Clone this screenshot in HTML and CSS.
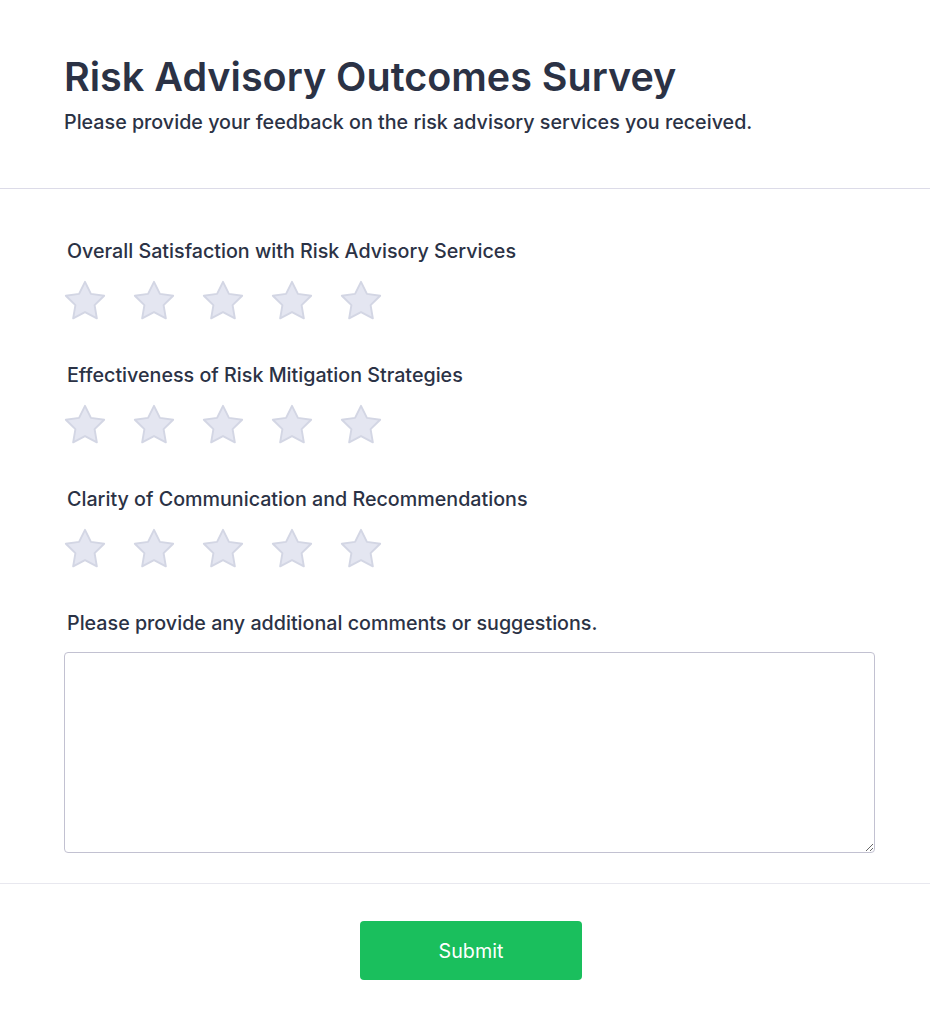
FILE: index.html
```html
<!DOCTYPE html>
<html lang="en">
<head>
    <meta charset="UTF-8">
    <meta name="viewport" content="width=device-width, initial-scale=1.0">
    <title>Risk Advisory Outcomes Survey</title>
    <link rel="stylesheet" href="styles.css">
</head>
<body>
    <header class="survey-header">
        <h1 class="survey-title">Risk Advisory Outcomes Survey</h1>
        <p class="survey-desc">Please provide your feedback on the risk advisory services you received.</p>
    </header>

    <main class="survey-body">
        <div class="question">
            <div class="question-title">Overall Satisfaction with Risk Advisory Services</div>
            <div class="stars">
                <svg class="star" viewBox="0 0 24 24"><polygon points="12 2 15.09 8.26 22 9.27 17 14.14 18.18 21.02 12 17.77 5.82 21.02 7 14.14 2 9.27 8.91 8.26"/></svg>
                <svg class="star" viewBox="0 0 24 24"><polygon points="12 2 15.09 8.26 22 9.27 17 14.14 18.18 21.02 12 17.77 5.82 21.02 7 14.14 2 9.27 8.91 8.26"/></svg>
                <svg class="star" viewBox="0 0 24 24"><polygon points="12 2 15.09 8.26 22 9.27 17 14.14 18.18 21.02 12 17.77 5.82 21.02 7 14.14 2 9.27 8.91 8.26"/></svg>
                <svg class="star" viewBox="0 0 24 24"><polygon points="12 2 15.09 8.26 22 9.27 17 14.14 18.18 21.02 12 17.77 5.82 21.02 7 14.14 2 9.27 8.91 8.26"/></svg>
                <svg class="star" viewBox="0 0 24 24"><polygon points="12 2 15.09 8.26 22 9.27 17 14.14 18.18 21.02 12 17.77 5.82 21.02 7 14.14 2 9.27 8.91 8.26"/></svg>
            </div>
        </div>

        <div class="question">
            <div class="question-title">Effectiveness of Risk Mitigation Strategies</div>
            <div class="stars">
                <svg class="star" viewBox="0 0 24 24"><polygon points="12 2 15.09 8.26 22 9.27 17 14.14 18.18 21.02 12 17.77 5.82 21.02 7 14.14 2 9.27 8.91 8.26"/></svg>
                <svg class="star" viewBox="0 0 24 24"><polygon points="12 2 15.09 8.26 22 9.27 17 14.14 18.18 21.02 12 17.77 5.82 21.02 7 14.14 2 9.27 8.91 8.26"/></svg>
                <svg class="star" viewBox="0 0 24 24"><polygon points="12 2 15.09 8.26 22 9.27 17 14.14 18.18 21.02 12 17.77 5.82 21.02 7 14.14 2 9.27 8.91 8.26"/></svg>
                <svg class="star" viewBox="0 0 24 24"><polygon points="12 2 15.09 8.26 22 9.27 17 14.14 18.18 21.02 12 17.77 5.82 21.02 7 14.14 2 9.27 8.91 8.26"/></svg>
                <svg class="star" viewBox="0 0 24 24"><polygon points="12 2 15.09 8.26 22 9.27 17 14.14 18.18 21.02 12 17.77 5.82 21.02 7 14.14 2 9.27 8.91 8.26"/></svg>
            </div>
        </div>

        <div class="question">
            <div class="question-title">Clarity of Communication and Recommendations</div>
            <div class="stars">
                <svg class="star" viewBox="0 0 24 24"><polygon points="12 2 15.09 8.26 22 9.27 17 14.14 18.18 21.02 12 17.77 5.82 21.02 7 14.14 2 9.27 8.91 8.26"/></svg>
                <svg class="star" viewBox="0 0 24 24"><polygon points="12 2 15.09 8.26 22 9.27 17 14.14 18.18 21.02 12 17.77 5.82 21.02 7 14.14 2 9.27 8.91 8.26"/></svg>
                <svg class="star" viewBox="0 0 24 24"><polygon points="12 2 15.09 8.26 22 9.27 17 14.14 18.18 21.02 12 17.77 5.82 21.02 7 14.14 2 9.27 8.91 8.26"/></svg>
                <svg class="star" viewBox="0 0 24 24"><polygon points="12 2 15.09 8.26 22 9.27 17 14.14 18.18 21.02 12 17.77 5.82 21.02 7 14.14 2 9.27 8.91 8.26"/></svg>
                <svg class="star" viewBox="0 0 24 24"><polygon points="12 2 15.09 8.26 22 9.27 17 14.14 18.18 21.02 12 17.77 5.82 21.02 7 14.14 2 9.27 8.91 8.26"/></svg>
            </div>
        </div>

        <div class="question question-comment">
            <div class="question-title">Please provide any additional comments or suggestions.</div>
            <textarea class="comment-box"></textarea>
        </div>
    </main>

    <footer class="survey-footer">
        <button class="submit-btn" type="button">Submit</button>
    </footer>
</body>
</html>
```

FILE: styles.css
```css
body {
    font-family: Inter, "Noto Sans", sans-serif;
    color: #2b3245;
    background-color: #ffffff;
    margin: 0;
    padding: 0;
}
.survey-header {
    padding: 53px 64px 54px;
    border-bottom: 1px solid #dcdbe8;
}
.survey-title {
    margin: 0;
    font-size: 39.5px;
    line-height: 48px;
    font-weight: 600;
}
.survey-desc {
    margin: 9px 0 0;
    font-size: 19.7px;
    line-height: 24px;
    font-weight: 500;
}
.survey-body {
    padding: 50px 55px 30px 64px;
    border-bottom: 1px solid #e8e8ef;
}
.question {
    margin-bottom: 39px;
}
.question-title {
    font-size: 19.7px;
    line-height: 24px;
    font-weight: 500;
    padding-left: 3px;
}
.stars {
    display: flex;
    gap: 23px;
    margin-top: 15px;
    margin-left: -2px;
}
.star {
    width: 46px;
    height: 46px;
    fill: #e4e6f1;
    stroke: #d3d6e4;
    stroke-width: 1;
    stroke-linejoin: round;
}
.question-comment {
    margin-bottom: 0;
}
.comment-box {
    display: block;
    box-sizing: border-box;
    width: 100%;
    height: 201px;
    margin-top: 17px;
    border: 1px solid #c2c1d1;
    border-radius: 4px;
    font-family: inherit;
    font-size: 16px;
    padding: 8px 12px;
}
.survey-footer {
    display: flex;
    justify-content: center;
    padding: 37px 0 50px 12px;
}
.submit-btn {
    width: 222px;
    height: 59px;
    background-color: #1abf5d;
    color: white;
    border: none;
    border-radius: 4px;
    font-family: inherit;
    font-size: 19.7px;
    font-weight: 400;
    cursor: pointer;
}
```
